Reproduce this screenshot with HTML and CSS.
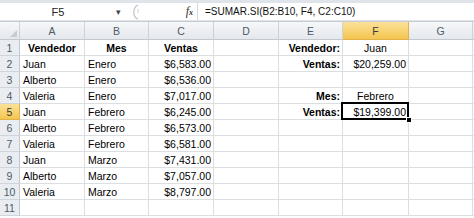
FILE: index.html
```html
<!DOCTYPE html>
<html lang="es">
<head>
    <meta charset="UTF-8">
    <title>SUMAR.SI</title>
    <link rel="stylesheet" href="styles.css">
</head>
<body>
    <div class="formula-bar">
        <div class="name-box">
            <span class="name">F5</span>
            <span class="drop">&#9662;</span>
        </div>
        <div class="bar-tools">
            <svg class="grip" width="12" height="16" viewBox="0 0 12 16">
                <path d="M8 1 C3 3 2 13 8 15" fill="none" stroke="#c9ced4" stroke-width="1.5"/>
                <path d="M7 6 h2 M7 8 h2" stroke="#c9ced4" stroke-width="1"/>
            </svg>
            <span class="fx"><i>f</i><span class="x">x</span></span>
        </div>
        <div class="formula">=SUMAR.SI(B2:B10, F4, C2:C10)</div>
    </div>

    <div class="sheet">
        <div class="hd corner"><span class="tri"></span></div>
        <div class="hd col">A</div>
        <div class="hd col">B</div>
        <div class="hd col">C</div>
        <div class="hd col">D</div>
        <div class="hd col">E</div>
        <div class="hd col active">F</div>
        <div class="hd col">G</div>
        <div class="hd edge"></div>

        <div class="hd row">1</div>
        <div class="c b center">Vendedor</div>
        <div class="c b center">Mes</div>
        <div class="c b center">Ventas</div>
        <div class="c"></div>
        <div class="c b right">Vendedor:</div>
        <div class="c center">Juan</div>
        <div class="c"></div>
        <div class="c end"></div>

        <div class="hd row">2</div>
        <div class="c">Juan</div>
        <div class="c">Enero</div>
        <div class="c right">$6,583.00</div>
        <div class="c"></div>
        <div class="c b right">Ventas:</div>
        <div class="c right">$20,259.00</div>
        <div class="c"></div>
        <div class="c end"></div>

        <div class="hd row">3</div>
        <div class="c">Alberto</div>
        <div class="c">Enero</div>
        <div class="c right">$6,536.00</div>
        <div class="c"></div>
        <div class="c"></div>
        <div class="c"></div>
        <div class="c"></div>
        <div class="c end"></div>

        <div class="hd row">4</div>
        <div class="c">Valeria</div>
        <div class="c">Enero</div>
        <div class="c right">$7,017.00</div>
        <div class="c"></div>
        <div class="c b right">Mes:</div>
        <div class="c center">Febrero</div>
        <div class="c"></div>
        <div class="c end"></div>

        <div class="hd row active">5</div>
        <div class="c">Juan</div>
        <div class="c">Febrero</div>
        <div class="c right">$6,245.00</div>
        <div class="c"></div>
        <div class="c b right">Ventas:</div>
        <div class="c right selected">$19,399.00<span class="handle"></span></div>
        <div class="c"></div>
        <div class="c end"></div>

        <div class="hd row">6</div>
        <div class="c">Alberto</div>
        <div class="c">Febrero</div>
        <div class="c right">$6,573.00</div>
        <div class="c"></div>
        <div class="c"></div>
        <div class="c"></div>
        <div class="c"></div>
        <div class="c end"></div>

        <div class="hd row">7</div>
        <div class="c">Valeria</div>
        <div class="c">Febrero</div>
        <div class="c right">$6,581.00</div>
        <div class="c"></div>
        <div class="c"></div>
        <div class="c"></div>
        <div class="c"></div>
        <div class="c end"></div>

        <div class="hd row">8</div>
        <div class="c">Juan</div>
        <div class="c">Marzo</div>
        <div class="c right">$7,431.00</div>
        <div class="c"></div>
        <div class="c"></div>
        <div class="c"></div>
        <div class="c"></div>
        <div class="c end"></div>

        <div class="hd row">9</div>
        <div class="c">Alberto</div>
        <div class="c">Marzo</div>
        <div class="c right">$7,057.00</div>
        <div class="c"></div>
        <div class="c"></div>
        <div class="c"></div>
        <div class="c"></div>
        <div class="c end"></div>

        <div class="hd row">10</div>
        <div class="c">Valeria</div>
        <div class="c">Marzo</div>
        <div class="c right">$8,797.00</div>
        <div class="c"></div>
        <div class="c"></div>
        <div class="c"></div>
        <div class="c"></div>
        <div class="c end"></div>

        <div class="hd row">11</div>
        <div class="c"></div>
        <div class="c"></div>
        <div class="c"></div>
        <div class="c"></div>
        <div class="c"></div>
        <div class="c"></div>
        <div class="c"></div>
        <div class="c end"></div>
    </div>
</body>
</html>
```

FILE: styles.css
```css
* {
    box-sizing: border-box;
}

body {
    margin: 0;
    padding: 0;
    width: 474px;
    height: 218px;
    overflow: hidden;
    background: #ffffff;
    font-family: "Liberation Sans", Arial, sans-serif;
    font-size: 10.5px;
    color: #000;
}

/* formula bar */
.formula-bar {
    display: flex;
    height: 22px;
    padding: 3px 0 1px 0;
    background: #dfe4ea;
    border-bottom: 1px solid #c6ccd4;
}

.name-box {
    width: 128px;
    display: flex;
    align-items: center;
    background: #fff;
    font-size: 11px;
    color: #222;
}

.name-box .name {
    flex: 1;
    text-align: center;
}

.name-box .drop {
    width: 12px;
    font-size: 9px;
    color: #444;
}

.bar-tools {
    width: 69px;
    display: flex;
    align-items: center;
    background: #fff;
    padding-left: 2px;
}

.bar-tools .fx {
    margin-left: auto;
    margin-right: 4px;
    font-family: "Liberation Serif", serif;
    font-size: 12px;
    color: #333;
}

.bar-tools .fx .x {
    font-size: 8px;
    font-style: italic;
    font-weight: bold;
}

.formula {
    flex: 1;
    display: flex;
    align-items: center;
    background: #fff;
    border-left: 1px solid #d4d9df;
    padding-left: 7px;
    font-size: 10px;
    color: #111;
}

/* grid */
.sheet {
    display: grid;
    grid-template-columns: 20px 65px 64px 65px 65px 64px 66px 64px 1fr;
    grid-template-rows: 18px repeat(11, 16px);
}

.hd {
    background: linear-gradient(#f6f7f9, #e4e8ed);
    border-right: 1px solid #cdd2d8;
    border-bottom: 1px solid #c2c8d0;
    color: #4d5a68;
    display: flex;
    align-items: center;
    justify-content: center;
    font-size: 10.5px;
}

.hd.row {
    background: #e9edf2;
    border-bottom: 1px solid #d0d5db;
    border-right: 1px solid #bfc6ce;
    padding-top: 1px;
}

.hd.active {
    background: linear-gradient(#fbe29a, #f4c54f);
    border-color: #e0b24a;
    color: #3a3a3a;
}

.hd.edge {
    border-right: none;
}

.corner {
    position: relative;
}

.corner .tri {
    position: absolute;
    right: 2px;
    bottom: 2px;
    width: 0;
    height: 0;
    border-left: 7px solid transparent;
    border-bottom: 7px solid #c7ccd3;
}

.c {
    border-right: 1px solid #dcdfe2;
    border-bottom: 1px solid #dcdfe2;
    padding: 1px 3px 0 3px;
    display: flex;
    align-items: center;
    white-space: nowrap;
}

.c.end {
    border-right: none;
}

.c.b {
    font-weight: bold;
}

.c.center {
    justify-content: center;
}

.c.right {
    justify-content: flex-end;
    padding-right: 2px;
}

.c.selected {
    position: relative;
}

.c.selected::after {
    content: "";
    position: absolute;
    left: -2px;
    top: -2px;
    right: -1px;
    bottom: -1px;
    border: 2px solid #000;
}

.c.selected .handle {
    position: absolute;
    right: -4px;
    bottom: -4px;
    width: 6px;
    height: 6px;
    background: #000;
    border: 1px solid #fff;
    z-index: 2;
}
```
